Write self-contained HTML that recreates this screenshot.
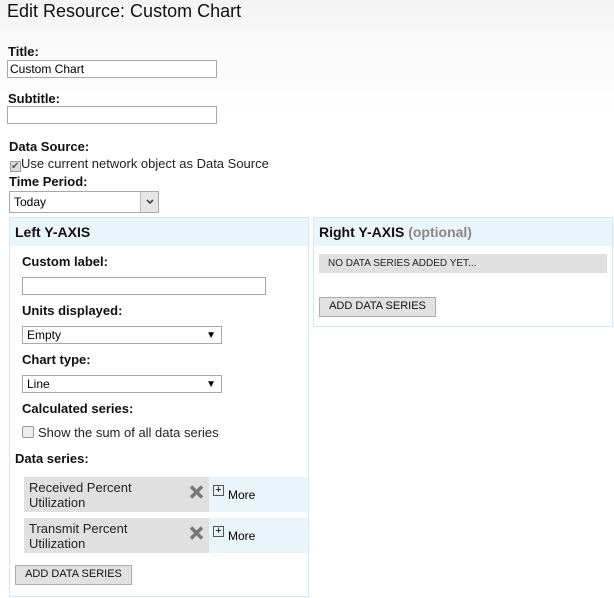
<!DOCTYPE html>
<html><head><style>
*{box-sizing:border-box;margin:0;padding:0}
body{width:614px;height:598px;position:relative;font-family:"Liberation Sans",Arial,sans-serif;font-size:12px;color:#000;background:linear-gradient(#f4f4f4,#fff 110px);overflow:hidden}
.a{position:absolute;white-space:nowrap}
.b{font-weight:bold;font-size:13px;color:#111}
.in{position:absolute;border:1px solid #a9a9a9;background:#fff;font-size:12px;padding:1px 2px}
.sel{position:absolute;border:1px solid #a9a9a9;background:#fff;font-size:12px;padding:2px 4px}
.sel .ar{position:absolute;right:5px;top:2px;font-size:10px}
.panel{position:absolute;border:1px solid #d3e6f3;background:#fff}
.ph{position:absolute;left:0;right:0;top:0;height:28px;background:#eaf4fb;font-weight:bold;font-size:14px;padding:6px 5px;color:#111}
.btn{position:absolute;background:#e1e1e1;border:1px solid #adadad;font-size:11px;text-align:center;line-height:17px;color:#111}
.row{position:absolute;left:24px;width:284px;height:35px;background:#eaf4fb}
.row .g{position:absolute;left:0;top:0;width:185px;height:35px;background:#e0e0e0}
.row .t{position:absolute;left:5px;top:3px;width:140px;font-size:13px;line-height:15px;color:#222;white-space:normal}
</style></head><body>
<div class="a" style="left:7px;top:1px;font-size:18px;color:#111">Edit Resource: Custom Chart</div>
<div class="a b" style="left:8px;top:44px">Title:</div>
<div class="in" style="left:7px;top:60px;width:210px;height:18px;line-height:14px">Custom Chart</div>
<div class="a b" style="left:8px;top:91px">Subtitle:</div>
<div class="in" style="left:7px;top:106px;width:210px;height:18px"></div>
<div class="a b" style="left:9px;top:139px">Data Source:</div>
<div class="a" style="left:10px;top:156px;font-size:13px;color:#222"><span style="display:inline-block;width:11px;height:11px;border:1px solid #999;background:#ddd;font-size:10px;line-height:9px;color:#555;vertical-align:-1px">✔</span>Use current network object as Data Source</div>
<div class="a b" style="left:9px;top:174px">Time Period:</div>
<div class="sel" style="left:9px;top:191px;width:150px;height:22px;line-height:16px">Today<span style="position:absolute;right:0;top:0;width:18px;height:20px;background:#e6e6e6;border-left:1px solid #bbb;text-align:center"><svg width="10" height="8" viewBox="0 0 10 8" style="margin-top:6px"><path d="M2 2L5 5L8 2" stroke="#444" stroke-width="1.6" fill="none"/></svg></span></div>

<div class="panel" style="left:9px;top:217px;width:300px;height:380px">
<div class="ph">Left Y-AXIS</div>
</div>
<div class="a b" style="left:22px;top:254px">Custom label:</div>
<div class="in" style="left:22px;top:277px;width:244px;height:18px"></div>
<div class="a b" style="left:22px;top:303px">Units displayed:</div>
<div class="sel" style="left:22px;top:326px;width:200px;height:18px;padding:1px 4px;line-height:14px">Empty<span class="ar">▼</span></div>
<div class="a b" style="left:22px;top:352px">Chart type:</div>
<div class="sel" style="left:22px;top:375px;width:200px;height:18px;padding:1px 4px;line-height:14px">Line<span class="ar">▼</span></div>
<div class="a b" style="left:22px;top:401px">Calculated series:</div>
<div class="a" style="left:22px;top:425px;font-size:13px;color:#222"><span style="display:inline-block;width:12px;height:12px;border:1px solid #999;border-radius:2px;background:#eee;vertical-align:-1px;margin-right:4px"></span>Show the sum of all data series</div>
<div class="a b" style="left:15px;top:451px">Data series:</div>
<div class="row" style="top:477px"><div class="g"></div><div class="t">Received Percent Utilization</div>
<svg class="a" style="left:165px;top:8px" width="15" height="14" viewBox="0 0 15 14"><path d="M2 1.5L13 12.5M13 1.5L2 12.5" stroke="#777" stroke-width="3.5"/></svg>
<div class="a" style="left:189px;top:8px;width:11px;height:11px;border:1px solid #555;font-size:11px;line-height:8px;text-align:center">+</div>
<div class="a" style="left:204px;top:11px;font-size:12px">More</div></div>
<div class="row" style="top:518px"><div class="g"></div><div class="t">Transmit Percent Utilization</div>
<svg class="a" style="left:165px;top:8px" width="15" height="14" viewBox="0 0 15 14"><path d="M2 1.5L13 12.5M13 1.5L2 12.5" stroke="#777" stroke-width="3.5"/></svg>
<div class="a" style="left:189px;top:8px;width:11px;height:11px;border:1px solid #555;font-size:11px;line-height:8px;text-align:center">+</div>
<div class="a" style="left:204px;top:11px;font-size:12px">More</div></div>
<div class="btn" style="left:15px;top:565px;width:117px;height:20px">ADD DATA SERIES</div>

<div class="panel" style="left:313px;top:217px;width:300px;height:110px">
<div class="ph">Right Y-AXIS <span style="color:#888">(optional)</span></div>
</div>
<div class="a" style="left:319px;top:254px;width:288px;height:19px;background:#e0e0e0;font-size:10px;line-height:19px;padding-left:9px;color:#222">NO DATA SERIES ADDED YET...</div>
<div class="btn" style="left:319px;top:297px;width:117px;height:20px">ADD DATA SERIES</div>
</body></html>
